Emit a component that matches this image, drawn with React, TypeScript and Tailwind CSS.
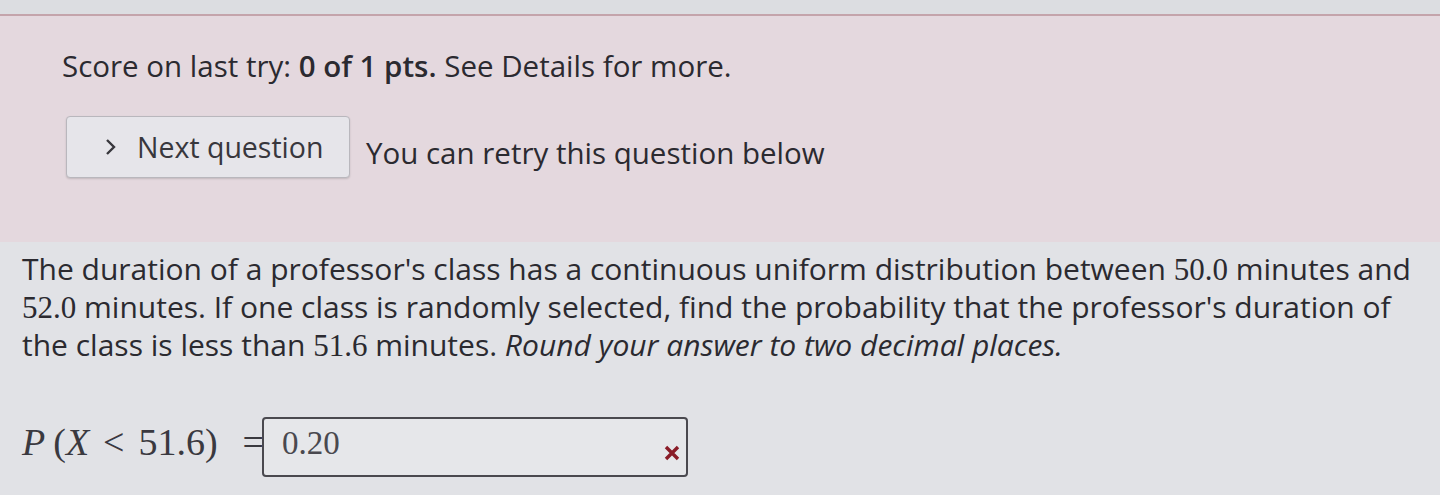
import React from "react";

const sans = { fontFamily: '"Open Sans", "Noto Sans", sans-serif' };
const serif = { fontFamily: '"Liberation Serif", "DejaVu Serif", serif' };

const Num: React.FC<{ children: React.ReactNode }> = ({ children }) => (
  <span style={serif} className="text-[31px] leading-[36px]">
    {children}
  </span>
);

export default function App() {
  return (
    <div
      style={sans}
      className="w-[1440px] h-[495px] overflow-hidden bg-[#e1e2e6] text-[#2b2a30] flex flex-col"
    >
      <div className="h-[14px] bg-[#dcdde1]" />
      <div className="h-[228px] border-t-2 border-[#c4a4ab] bg-[#e4d8de] pl-[62px] pt-[30px]">
        <p className="text-[29.5px] leading-[40px]">
          Score on last try: <span className="font-semibold">0 of 1 pts.</span> See Details
          for more.
        </p>
        <div className="mt-[30px] flex items-center gap-[16px]">
          <button className="ml-[4px] h-[62px] w-[284px] rounded-[4px] border border-[#b9b7bd] bg-[#e6e5ea] flex items-center pl-[38px] gap-[20px] text-[28.5px] text-[#38373d] shadow-[0_1px_2px_rgba(0,0,0,0.15)]">
            <svg width="12" height="18" viewBox="0 0 12 18" fill="none">
              <path d="M2 2 L9 9 L2 16" stroke="#38373d" strokeWidth="2.4" />
            </svg>
            Next question
          </button>
          <span className="text-[29.5px] mt-[12px]">You can retry this question below</span>
        </div>
      </div>
      <div className="pl-[22px] pr-[10px] pt-[8px]">
        <div className="text-[30px] leading-[37px] whitespace-nowrap">
          <p>
            The duration of a professor's class has a continuous uniform distribution between{" "}
            <Num>50.0</Num> minutes and
          </p>
          <p>
            <Num>52.0</Num> minutes. If one class is randomly selected, find the probability that
            the professor's duration of
          </p>
          <p>
            the class is less than <Num>51.6</Num> minutes.{" "}
            <em>Round your answer to two decimal places.</em>
          </p>
        </div>
        <div className="mt-[53px] flex items-center">
          <span
            style={serif}
            className="w-[242px] text-[38px] text-[#3a393f] whitespace-nowrap flex items-center -mt-[10px]"
          >
            <i>P</i>
            <span className="ml-[8px]">(</span>
            <i>X</i>
            <span className="mx-[14px]">&lt;</span>
            51.6)
            <span className="ml-auto">=</span>
          </span>
          <div className="-ml-[2px] h-[60px] w-[426px] rounded-[4px] border-2 border-[#4a494f] bg-[#e6e7ea] flex items-center justify-between pl-[18px] pr-[4px]">
            <span style={serif} className="text-[33px] text-[#4a494f] -mt-[6px]">
              0.20
            </span>
            <svg width="20" height="20" viewBox="0 0 20 20" className="mt-[12px]">
              <path d="M4 4 L16 16 M16 4 L4 16" stroke="#8a1c28" strokeWidth="3.4" />
            </svg>
          </div>
        </div>
      </div>
    </div>
  );
}
